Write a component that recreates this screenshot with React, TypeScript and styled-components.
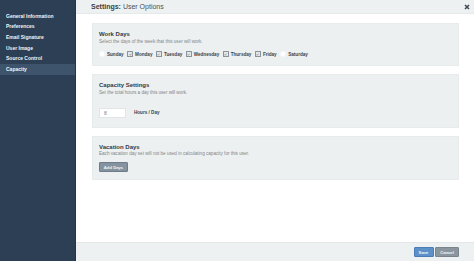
import React from "react";
import styled, { createGlobalStyle } from "styled-components";

const days = [
  { name: "Sunday", on: false },
  { name: "Monday", on: true },
  { name: "Tuesday", on: true },
  { name: "Wednesday", on: true },
  { name: "Thursday", on: true },
  { name: "Friday", on: true },
  { name: "Saturday", on: false },
];

const menu = [
  "General Information",
  "Preferences",
  "Email Signature",
  "User Image",
  "Source Control",
  "Capacity",
];

const App = () => {
  return (
    <Page>
      <GlobalStyle />
      <Sidebar>
        {menu.map((item) => (
          <MenuItem key={item} active={item === "Capacity"}>
            {item}
          </MenuItem>
        ))}
      </Sidebar>
      <Main>
        <Header>
          <Title>
            <b>Settings:</b> User Options
          </Title>
          <Close aria-label="close">
            <svg width="6" height="6" viewBox="0 0 6 6">
              <path d="M1 1L5 5M5 1L1 5" stroke="#3f4850" strokeWidth="1.5" />
            </svg>
          </Close>
        </Header>
        <Content>
          <Panel>
            <PanelTitle>Work Days</PanelTitle>
            <PanelDesc>Select the days of the week that this user will work.</PanelDesc>
            <DayRow>
              {days.map((d) => (
                <Day key={d.name}>
                  <Box checked={d.on}>
                    {d.on && (
                      <svg width="3" height="3" viewBox="0 0 4 4">
                        <path d="M0.6 2L1.6 3L3.4 0.9" stroke="#6b747c" strokeWidth="0.8" fill="none" />
                      </svg>
                    )}
                  </Box>
                  <DayLabel>{d.name}</DayLabel>
                </Day>
              ))}
            </DayRow>
          </Panel>
          <Panel tall>
            <PanelTitle>Capacity Settings</PanelTitle>
            <PanelDesc>Set the total hours a day this user will work.</PanelDesc>
            <HoursRow>
              <HoursInput>8</HoursInput>
              <DayLabel>Hours / Day</DayLabel>
            </HoursRow>
          </Panel>
          <Panel>
            <PanelTitle>Vacation Days</PanelTitle>
            <PanelDesc>
              Each vacation day set will not be used in calculating capacity for this user.
            </PanelDesc>
            <AddButton>Add Days</AddButton>
          </Panel>
        </Content>
        <Footer>
          <FooterButton variant="save">Save</FooterButton>
          <FooterButton variant="cancel">Cancel</FooterButton>
        </Footer>
      </Main>
    </Page>
  );
};

const GlobalStyle = createGlobalStyle`
  html, body {
    margin: 0;
    padding: 0;
    width: 474px;
    height: 261px;
    overflow: hidden;
    font-family: "Liberation Sans", Arial, sans-serif;
    background: #ffffff;
  }
`;

const Page = styled.div`
  display: flex;
  width: 474px;
  height: 261px;
`;

const Sidebar = styled.nav`
  width: 75px;
  flex-shrink: 0;
  background: #2c3f54;
  border-right: 1px solid #24344a;
  padding-top: 10.7px;
  box-sizing: content-box;
`;

const MenuItem = styled.div<{ active?: boolean }>`
  height: 10.67px;
  line-height: 10.67px;
  padding-left: 6px;
  font-size: 5px;
  font-weight: bold;
  color: #f2f4f6;
  background: ${(p) => (p.active ? "#3d546c" : "transparent")};
  white-space: nowrap;
`;

const Main = styled.div`
  flex: 1;
  display: flex;
  flex-direction: column;
  min-width: 0;
`;

const Header = styled.header`
  height: 14px;
  flex-shrink: 0;
  display: flex;
  align-items: center;
  justify-content: space-between;
  padding: 0 4px 0 15px;
  background: #eef1f2;
  border-bottom: 1px solid #e6e9ea;
  box-sizing: border-box;
`;

const Title = styled.div`
  font-size: 7px;
  color: #4a4f55;
  b {
    color: #3a3f45;
  }
`;

const Close = styled.div`
  display: flex;
  align-items: center;
`;

const Content = styled.div`
  flex: 1;
  display: flex;
  flex-direction: column;
  gap: 8px;
  padding: 9px 15px 0 16px;
`;

const Panel = styled.section<{ tall?: boolean }>`
  background: #edf0f1;
  border: 1px solid #e8ebec;
  padding: 6px 6px ${(p) => (p.tall ? "9px" : "7px")};
`;

const PanelTitle = styled.h3`
  margin: 0;
  font-size: 6px;
  line-height: 8px;
  font-weight: bold;
  color: #333a42;
`;

const PanelDesc = styled.p`
  margin: 0.5px 0 0;
  font-size: 4.6px;
  line-height: 6px;
  color: #80868c;
`;

const DayRow = styled.div`
  display: flex;
  align-items: center;
  margin-top: 5.5px;
  height: 8px;
`;

const Day = styled.label`
  display: flex;
  align-items: center;
  margin-right: 3.5px;
`;

const Box = styled.span<{ checked?: boolean }>`
  width: 4px;
  height: 4px;
  margin-right: 2px;
  display: flex;
  align-items: center;
  justify-content: center;
  background: ${(p) => (p.checked ? "#e4e7e9" : "#ffffff")};
  border: ${(p) => (p.checked ? "0.6px solid #8a939b" : "0.6px solid #f4f5f6")};
  border-radius: ${(p) => (p.checked ? "0.5px" : "2px")};
`;

const DayLabel = styled.span`
  font-size: 4.6px;
  font-weight: bold;
  color: #3c434a;
  white-space: nowrap;
`;

const HoursRow = styled.div`
  display: flex;
  align-items: center;
  gap: 8px;
  margin-top: 12px;
`;

const HoursInput = styled.div`
  width: 27px;
  height: 10px;
  box-sizing: border-box;
  background: #ffffff;
  border: 0.5px solid #e2e5e7;
  font-size: 5px;
  line-height: 9px;
  padding-left: 4px;
  color: #777d83;
`;

const AddButton = styled.button`
  display: block;
  margin-top: 5px;
  width: 29px;
  height: 10px;
  padding: 0;
  border: 0.5px solid #6f7b86;
  border-radius: 1px;
  background: #8593a0;
  color: #f3f5f7;
  font-family: inherit;
  font-size: 4.2px;
  font-weight: bold;
`;

const Footer = styled.footer`
  height: 19px;
  flex-shrink: 0;
  display: flex;
  align-items: center;
  justify-content: flex-end;
  gap: 1.5px;
  padding: 0 15px 0 0;
  background: #eef1f2;
  border-top: 1px solid #e4e7e8;
  box-sizing: border-box;
`;

const FooterButton = styled.button<{ variant: "save" | "cancel" }>`
  height: 10px;
  width: ${(p) => (p.variant === "save" ? "20px" : "24px")};
  padding: 0;
  border: 0.5px solid ${(p) => (p.variant === "save" ? "#4a7db5" : "#7a848c")};
  border-radius: 1px;
  background: ${(p) => (p.variant === "save" ? "#5b90c8" : "#8b959d")};
  color: #f5f7f9;
  font-family: inherit;
  font-size: 4.2px;
  font-weight: bold;
`;

export default App;
